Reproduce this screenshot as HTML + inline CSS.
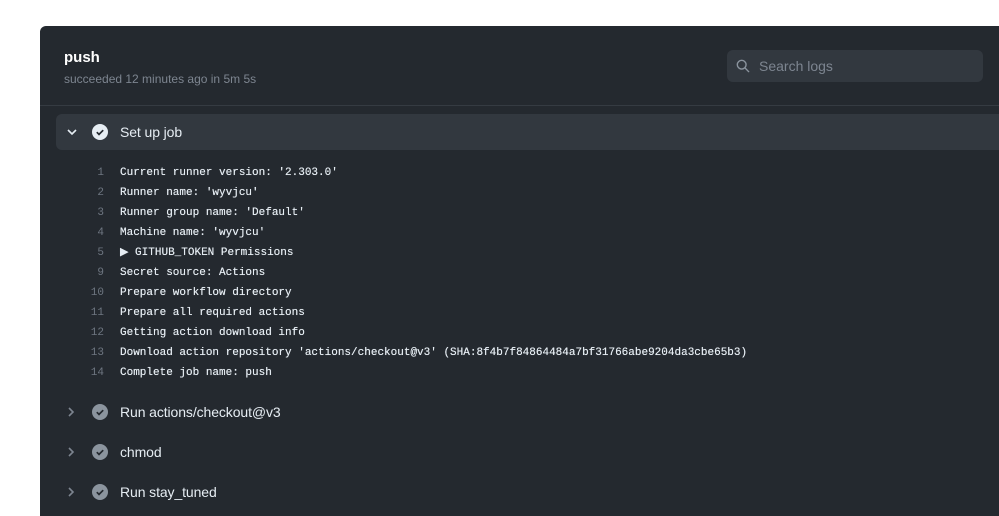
<!DOCTYPE html>
<html><head><style>
body{margin:0;width:999px;height:501px;background:#fff;overflow:hidden;font-family:"Liberation Sans",sans-serif;}
.panel{position:absolute;left:40px;top:26px;width:970px;height:490px;background:#24292f;border-radius:6px 0 0 0;}
.title{position:absolute;left:24px;top:23px;color:#fff;font-weight:bold;font-size:15px;}
.sub{position:absolute;left:24px;top:46px;color:#7d8590;font-size:12px;}
.search{position:absolute;left:687px;top:24px;width:256px;height:32px;background:#32383f;border-radius:6px;}
.search span{position:absolute;left:32px;top:8px;color:#7d8590;font-size:14px;}
.hr{position:absolute;left:0;top:79px;width:100%;height:1px;background:#353b42;}
.step{position:absolute;left:16px;height:36px;width:960px;}
.step.open{background:#32383f;border-radius:6px;top:88px;}
.step .lbl{position:absolute;left:64px;top:10px;font-size:14px;color:#e6edf3;letter-spacing:-0.1px;}
.step svg{position:absolute;}
.log{position:absolute;left:40px;top:137px;font-family:"Liberation Mono",monospace;font-size:11px;color:#e6edf3;}
.row{height:20px;line-height:20px;white-space:pre;text-shadow:0 0 0.4px #e6edf3;}
.n{display:inline-block;width:24px;text-align:right;color:#6e7681;margin-right:16px;text-shadow:none;}
</style></head><body>
<div class="panel">
<div class="title">push</div>
<div class="sub">succeeded 12 minutes ago in 5m 5s</div>
<div class="search"><svg style="position:absolute;left:9px;top:9px" width="14" height="14" viewBox="0 0 16 16"><circle cx="6.5" cy="6.5" r="5" fill="none" stroke="#8b949e" stroke-width="1.6"/><path d="M10.2 10.2L14.5 14.5" stroke="#8b949e" stroke-width="1.6" stroke-linecap="round"/></svg><span>Search logs</span></div>
<div class="hr"></div>
<div class="step open">
<svg style="left:10px;top:13px" width="12" height="10" viewBox="0 0 12 10"><path d="M2 3l4 4 4-4" fill="none" stroke="#e6edf3" stroke-width="1.6"/></svg>
<svg style="left:36px;top:10px" width="16" height="16" viewBox="0 0 16 16"><circle cx="8" cy="8" r="8" fill="#e6edf3"/><path d="M4.8 8.2l2.2 2.2 4.2-4.2" fill="none" stroke="#24292f" stroke-width="1.7"/></svg>
<div class="lbl">Set up job</div></div>
<div class="log">
<div class="row"><span class="n">1</span>Current runner version: '2.303.0'</div>
<div class="row"><span class="n">2</span>Runner name: 'wyvjcu'</div>
<div class="row"><span class="n">3</span>Runner group name: 'Default'</div>
<div class="row"><span class="n">4</span>Machine name: 'wyvjcu'</div>
<div class="row"><span class="n">5</span>▶ GITHUB_TOKEN Permissions</div>
<div class="row"><span class="n">9</span>Secret source: Actions</div>
<div class="row"><span class="n">10</span>Prepare workflow directory</div>
<div class="row"><span class="n">11</span>Prepare all required actions</div>
<div class="row"><span class="n">12</span>Getting action download info</div>
<div class="row"><span class="n">13</span>Download action repository 'actions/checkout@v3' (SHA:8f4b7f84864484a7bf31766abe9204da3cbe65b3)</div>
<div class="row"><span class="n">14</span>Complete job name: push</div>
</div>
<div class="step" style="top:368px">
<svg style="left:10px;top:12px" width="10" height="12" viewBox="0 0 10 12"><path d="M3 2l4 4-4 4" fill="none" stroke="#7d8590" stroke-width="1.6"/></svg>
<svg style="left:36px;top:10px" width="16" height="16" viewBox="0 0 16 16"><circle cx="8" cy="8" r="8" fill="#8b949e"/><path d="M4.8 8.2l2.2 2.2 4.2-4.2" fill="none" stroke="#24292f" stroke-width="1.7"/></svg>
<div class="lbl">Run actions/checkout@v3</div></div>
<div class="step" style="top:408px">
<svg style="left:10px;top:12px" width="10" height="12" viewBox="0 0 10 12"><path d="M3 2l4 4-4 4" fill="none" stroke="#7d8590" stroke-width="1.6"/></svg>
<svg style="left:36px;top:10px" width="16" height="16" viewBox="0 0 16 16"><circle cx="8" cy="8" r="8" fill="#8b949e"/><path d="M4.8 8.2l2.2 2.2 4.2-4.2" fill="none" stroke="#24292f" stroke-width="1.7"/></svg>
<div class="lbl">chmod</div></div>
<div class="step" style="top:448px">
<svg style="left:10px;top:12px" width="10" height="12" viewBox="0 0 10 12"><path d="M3 2l4 4-4 4" fill="none" stroke="#7d8590" stroke-width="1.6"/></svg>
<svg style="left:36px;top:10px" width="16" height="16" viewBox="0 0 16 16"><circle cx="8" cy="8" r="8" fill="#8b949e"/><path d="M4.8 8.2l2.2 2.2 4.2-4.2" fill="none" stroke="#24292f" stroke-width="1.7"/></svg>
<div class="lbl">Run stay_tuned</div></div>
</div>
</body></html>
